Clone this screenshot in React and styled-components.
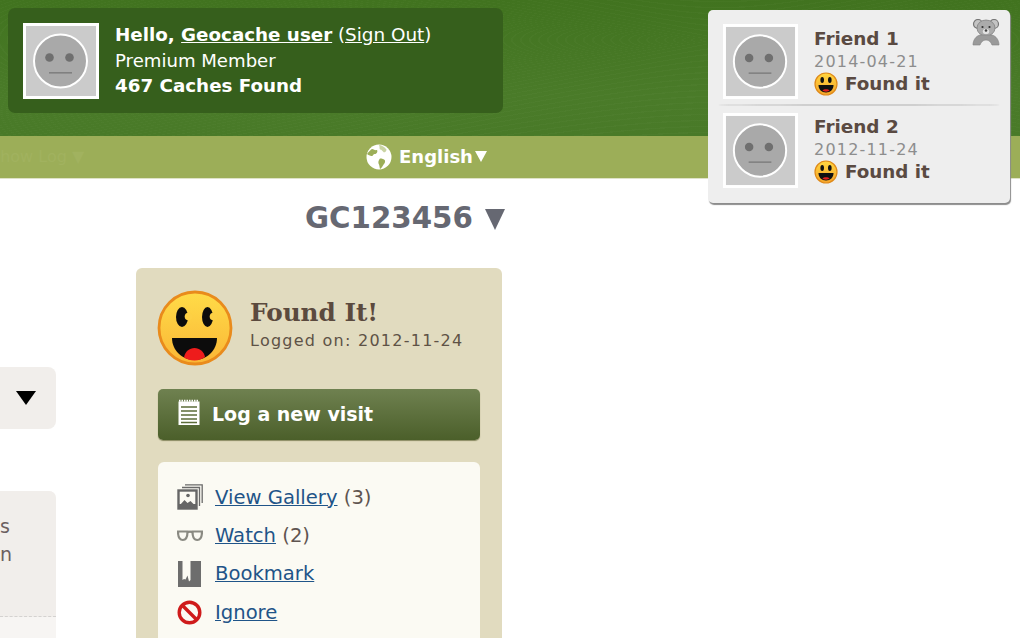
import React from "react";
import styled, { createGlobalStyle } from "styled-components";

const Global = createGlobalStyle`
  html, body { margin: 0; padding: 0; background: #fff; width: 1020px; height: 638px; overflow: hidden; }
  body { font-family: "DejaVu Sans", Verdana, sans-serif; }
  #root { width: 1020px; height: 638px; }
`;

const Page = styled.div`position: relative; width: 1020px; height: 638px; overflow: hidden; background: #fff;`;
const Header = styled.header`
  height: 136px; box-sizing: border-box; padding: 8px;
  background:
    repeating-radial-gradient(ellipse at 720px 40px, rgba(255,255,255,.018) 0 2px, transparent 2px 9px),
    linear-gradient(#41731f, #4a7b29 70%, #497a28);
`;
const UserCard = styled.div`
  width: 495px; height: 105px; box-sizing: border-box; padding: 15px 14px 14px 15px; border-radius: 7px;
  background: #365f1c; display: flex; gap: 16px; align-items: flex-start; color: #fff;
`;
const UserLines = styled.div`font-size: 18.1px; line-height: 25.5px; margin-top: -1px; white-space: nowrap;`;
const Bold = styled.span`font-weight: 700; font-size: 18.3px;`;
const UserLink = styled.a`color: inherit; text-decoration: underline; font-weight: ${p => (p.$bold ? 700 : 400)}; font-size: ${p => (p.$bold ? 18.3 : 18.4)}px;`;
const NavBar = styled.nav`
  height: 43px; background: #9cae58; border-bottom: 1px solid #dfe3c8; box-sizing: border-box;
  display: flex; align-items: center; justify-content: center; padding-right: 167px; gap: 7px;
  position: relative;
`;
const NavFaded = styled.span`position: absolute; left: -10px; top: 11px; font-size: 16px; color: #a1b25f; white-space: nowrap;`;
const Lang = styled.span`font-size: 18px; line-height: 22px; font-weight: 700; color: #fff; white-space: nowrap; display: flex; align-items: center; gap: 2px; margin-top: -1px;`;
const Caret = styled.span`
  display: inline-block; width: 0; height: 0;
  border-left: ${p => p.$w / 2}px solid transparent;
  border-right: ${p => p.$w / 2}px solid transparent;
  border-top: ${p => p.$h}px solid ${p => p.$color};
`;
const Body = styled.main`display: grid; grid-template-columns: 56px 366px 1fr; column-gap: 80px; position: relative;`;
const PageTitleRow = styled.div`
  grid-column: 1 / -1; height: 89px; box-sizing: border-box; padding: 21px 0 0 305px;
  font-size: 29.3px; font-weight: 700; color: #666872; line-height: 36px; white-space: nowrap;
  display: flex; align-items: flex-start; gap: 12px;
`;
const TitleCaret = styled.span`margin-top: 9px; line-height: 0;`;
const LeftCol = styled.div`display: flex; flex-direction: column; gap: 62px; padding-top: 188px; margin-top: -89px;`;
const Select = styled.div`
  height: 62px; background: #f1eeeb; border-radius: 0 8px 8px 0; display: flex; align-items: center; justify-content: flex-end; padding-right: 20px;
`;
const Info = styled.div`background: #f7f5f3; border-radius: 0 7px 0 0; overflow: hidden;`;
const InfoBody = styled.div`
  height: 126px; box-sizing: border-box; background: #f1eeeb; border-bottom: 1px dashed #d4d2d0;
  font-size: 19px; line-height: 28px; color: #6b6060; padding-top: 21px;
`;
const InfoFoot = styled.div`height: 24px;`;
const LogPanel = styled.section`
  background: #e1dbbf; border-radius: 6px 6px 0 0; padding: 22px 22px 0; height: 371px; box-sizing: border-box;
`;
const Status = styled.div`display: flex; gap: 17px; align-items: flex-start; margin-left: -1px;`;
const StatusTitle = styled.div`font-family: "DejaVu Serif", serif; font-weight: 700; font-size: 24.7px; color: #5b4a3e; line-height: 32px; margin-top: 7px;`;
const StatusDate = styled.div`font-size: 16px; line-height: 20px; color: #5e5246; letter-spacing: 1.25px; white-space: nowrap; margin-top: 2px;`;
const LogButton = styled.button`
  display: flex; align-items: center; gap: 12px; width: 322px; height: 51px; margin-top: 23px; padding: 0 0 2px 20px; border: 0; border-radius: 5px;
  background: linear-gradient(#6f8150, #4b5f2a); color: #fff; font: 700 19px "DejaVu Sans", sans-serif; box-shadow: 0 1px 1px #8a8a62;
`;
const PadWrap = styled.span`margin-top: -3px; line-height: 0;`;
const Links = styled.div`
  margin-top: 22px; width: 322px; height: 220px; box-sizing: border-box; background: #fbfaf3; border-radius: 6px 6px 0 0;
  padding: 16px 18px; display: flex; flex-direction: column;
`;
const LinkRow = styled.div`display: flex; align-items: center; gap: 12px; height: 38.4px; font-size: 19.6px; color: #5f5450;`;
const IconBox = styled.span`width: 27px; display: flex; justify-content: center; flex: none;`;
const BlueLink = styled.a`color: #1f5488; text-decoration: underline;`;
const Friends = styled.aside`
  position: absolute; left: 708px; top: 10px; width: 302px; height: 193px; box-sizing: border-box;
  background: #eeeeee; border-radius: 5px; box-shadow: 1px 2px 1px #8c8c8c; padding: 14px 15px 0;
`;
const FriendRow = styled.div`
  display: flex; gap: 16px; height: 89px; position: relative;
  &:first-of-type::after {
    content: ""; position: absolute; left: -5px; right: -5px; bottom: 7px; height: 2px; border-radius: 50%;
    background: #cfcfcf;
  }
`;
const FriendName = styled.div`font-size: 18.4px; font-weight: 700; color: #5a4a42; line-height: 22px; margin-top: ${p => (p.$second ? 3 : 4)}px;`;
const FriendDate = styled.div`font-size: 16px; color: #8d8d8d; line-height: 22px; letter-spacing: 1.2px; white-space: nowrap; margin: 1px 0 -1px;`;
const FriendStatus = styled.div`display: flex; gap: 7px; align-items: center; font-size: 18.3px; font-weight: 700; color: #5a4a42; line-height: 24px; white-space: nowrap;`;
const Bear = styled.span`position: absolute; right: 10px; top: 9px; line-height: 0;`;

const Avatar = ({ size = 76 }) => (
  <svg width={size} height={size} viewBox="0 0 76 76" style={{ flex: "none" }}>
    <rect width="76" height="76" fill="#fff" />
    <rect x="3" y="3" width="70" height="70" fill="#cbcbcb" />
    <circle cx="37.5" cy="38" r="26.500" fill="#a9a9a9" stroke="#fff" strokeWidth="2" />
    <circle cx="26.500" cy="34.500" r="4.300" fill="#6f6f6f" />
    <circle cx="46.500" cy="34.500" r="4.300" fill="#6f6f6f" />
    <rect x="26" y="49" width="23" height="1.600" fill="#808080" />
  </svg>
);

const Smile = ({ id, size = 24 }) => (
  <svg width={size} height={size} viewBox="0 0 24 24" style={{ flex: "none" }}>
    <defs>
      <linearGradient id={id} x1="0" y1="0" x2="0" y2="1"><stop offset="0" stopColor="#ffd640" /><stop offset="1" stopColor="#f7a52a" /></linearGradient>
    </defs>
    <circle cx="12" cy="12" r="11" fill={`url(#${id})`} stroke="#df8a1a" strokeWidth="1.200" />
    <ellipse cx="8.200" cy="8" rx="1.800" ry="3" fill="#111" />
    <ellipse cx="15.800" cy="8" rx="1.800" ry="3" fill="#111" />
    <path d="M4.500 13h15c0 4.500-3 7.500-7.500 7.500s-7.500-3-7.500-7.500z" fill="#111" />
    <path d="M8.500 18.500c1-1.800 6-1.800 7 0-1 1.500-6 1.500-7 0z" fill="#e02020" />
  </svg>
);

const BigSmile = () => (
  <svg width="76" height="76" viewBox="0 0 76 76" style={{ flex: "none" }}>
    <defs>
      <linearGradient id="bg" x1="0" y1="0" x2="0" y2="1"><stop offset="0" stopColor="#ffdc48" /><stop offset="1" stopColor="#fab636" /></linearGradient>
    </defs>
    <circle cx="38" cy="38" r="36" fill="url(#bg)" stroke="#e98b1c" strokeWidth="2.800" />
    <ellipse cx="25" cy="27" rx="6" ry="10" fill="#0c0c0c" />
    <circle cx="31.500" cy="26.500" r="3.800" fill="#fdd044" />
    <ellipse cx="50.500" cy="27" rx="5.500" ry="10" fill="#0c0c0c" />
    <circle cx="56.500" cy="26.500" r="3.800" fill="#fdd044" />
    <path d="M15 48h45c0 12-10 22-22.500 22S15 60 15 48z" fill="#0c0c0c" />
    <path d="M27 67.500c1-6 5.500-9.500 10.500-9.500s9.500 3.500 10.500 9c-3 2.200-6.500 3.500-10.500 3.500s-7.500-1-10.500-3z" fill="#ee1c1c" />
  </svg>
);

const Globe = () => (
  <svg width="26" height="26" viewBox="0 0 26 26" style={{ flex: "none" }}>
    <circle cx="13" cy="13" r="12.500" fill="#fff" />
    <path d="M1 10c2-2.500 3.500-4 5-5 2 .5 3 1.500 5 1 1 1.500 0 3-1.500 4-1.500 0-2.500 .5-3 2-1.800 0-3.500-.5-5.500-2z" fill="#9cae58" />
    <path d="M14 14.500c2 0 4 .5 5 2 .5 2-1 3.500-2 5-.5 1-1.500 2.500-3 3.500-.5-2-.5-4-1.500-5.500-.5-2 .5-4 1.500-5z" fill="#9cae58" />
    <path d="M13 1c1 1.500 0 3 1 4.500 2 0 2.500 2 4 3 1.500-.5 2.500-1.500 2.500-3C18 2.500 15.500 1 13 1z" fill="#9cae58" opacity=".55" />
  </svg>
);

const Pad = () => (
  <svg width="22" height="26" viewBox="0 0 22 26">
    <rect x="0.500" y="2.500" width="21" height="23.500" fill="#fff" />
    <path d="M1 1.800h20" stroke="#fff" strokeWidth="2" strokeDasharray="1.500 1" />
    <path d="M3 8h16M3 12h16M3 16h16M3 20h16M3 23.500h16" stroke="#5c6d3a" strokeWidth="1.300" />
  </svg>
);

const GalleryIcon = () => (
  <svg width="26" height="26" viewBox="0 0 26 26">
    <path d="M8 .8h17.200V19M5 3.500h17.500V22" fill="none" stroke="#6a6a6a" strokeWidth="1.300" />
    <rect x="1.500" y="6.500" width="18" height="18" fill="#fbfaf3" stroke="#666" strokeWidth="2.400" />
    <rect x="1" y="20" width="19" height="5" fill="#666" />
    <path d="M3 21l4.500-5 3 3 3-2 4 4z" fill="#666" />
    <circle cx="11" cy="11.500" r="1.800" fill="#666" />
  </svg>
);
const GlassesIcon = () => (
  <svg width="26" height="14" viewBox="0 0 26 14">
    <path d="M1 2.500h9.500c0 5-1 8.500-4.700 8.500S1 7.500 1 2.500zM15.500 2.500H25c0 5-1 8.500-4.700 8.500s-4.800-3.500-4.800-8.500zM10.500 3.500c1.500-1 3.500-1 5 0" fill="none" stroke="#8a8a82" strokeWidth="2.200" />
  </svg>
);
const BookmarkIcon = () => (
  <svg width="23" height="26" viewBox="0 0 23 26">
    <rect width="23" height="26" fill="#6d6d6d" />
    <path d="M4.500 0h8v19l-1.500 1.500-1.500-6-2 4-1.500-.5-1.500 1z" fill="#fbfaf3" />
  </svg>
);
const IgnoreIcon = () => (
  <svg width="25" height="25" viewBox="0 0 25 25">
    <circle cx="12.500" cy="12.500" r="10.300" fill="none" stroke="#cf1b1b" strokeWidth="3.400" />
    <path d="M5 5l15 15" stroke="#cf1b1b" strokeWidth="3.400" />
  </svg>
);
const BearIcon = () => (
  <svg width="28" height="27" viewBox="0 0 28 27">
    <circle cx="6" cy="5" r="4.500" fill="#c4c4c4" stroke="#777" strokeWidth="1.200" />
    <circle cx="22" cy="5" r="4.500" fill="#c4c4c4" stroke="#777" strokeWidth="1.200" />
    <ellipse cx="14" cy="9" rx="9" ry="8" fill="#ababab" stroke="#808080" strokeWidth=".8" />
    <ellipse cx="14" cy="12.500" rx="3.200" ry="2.800" fill="#e2e2e2" />
    <circle cx="14" cy="11.500" r="1.300" fill="#444" />
    <circle cx="10.500" cy="8" r="1.100" fill="#333" /><circle cx="17.500" cy="8" r="1.100" fill="#333" />
    <path d="M1 26c0-5 3-9 7-10h12c4 1 7 5 7 10h-7c-1-3-3-5-6-5s-5 2-6 5z" fill="#9a9a9a" stroke="#808080" strokeWidth=".6" />
  </svg>
);

const friends = [
  { name: "Friend 1", date: "2014-04-21" },
  { name: "Friend 2", date: "2012-11-24" },
];

export default function App() {
  return (
    <Page>
      <Global />
      <Header>
        <UserCard>
          <Avatar />
          <UserLines>
            <div><Bold>Hello, </Bold><UserLink $bold href="#">Geocache user</UserLink> (<UserLink href="#">Sign Out</UserLink>)</div>
            <div>Premium Member</div>
            <Bold>467 Caches Found</Bold>
          </UserLines>
        </UserCard>
      </Header>
      <NavBar>
        <NavFaded>Show Log ▼</NavFaded>
        <Globe />
        <Lang>English<Caret $w={13} $h={11} $color="#fff" /></Lang>
      </NavBar>
      <Body>
        <PageTitleRow>GC123456<TitleCaret><Caret $w={20} $h={21} $color="#666872" /></TitleCaret></PageTitleRow>
        <LeftCol>
          <Select><Caret $w={20} $h={14} $color="#000" /></Select>
          <Info>
            <InfoBody>s<br />n</InfoBody>
            <InfoFoot />
          </Info>
        </LeftCol>
        <LogPanel>
          <Status>
            <BigSmile />
            <div>
              <StatusTitle>Found It!</StatusTitle>
              <StatusDate>Logged on: 2012-11-24</StatusDate>
            </div>
          </Status>
          <LogButton><PadWrap><Pad /></PadWrap>Log a new visit</LogButton>
          <Links>
            <LinkRow><IconBox><GalleryIcon /></IconBox><span><BlueLink href="#">View Gallery</BlueLink> (3)</span></LinkRow>
            <LinkRow><IconBox><GlassesIcon /></IconBox><span><BlueLink href="#">Watch</BlueLink> (2)</span></LinkRow>
            <LinkRow><IconBox><BookmarkIcon /></IconBox><BlueLink href="#">Bookmark</BlueLink></LinkRow>
            <LinkRow><IconBox><IgnoreIcon /></IconBox><BlueLink href="#">Ignore</BlueLink></LinkRow>
          </Links>
        </LogPanel>
      </Body>
      <Friends>
        <Bear><BearIcon /></Bear>
        {friends.map((f, i) => (
          <FriendRow key={f.name}>
            <Avatar size={75} />
            <div>
              <FriendName $second={i === 1}>{f.name}</FriendName>
              <FriendDate>{f.date}</FriendDate>
              <FriendStatus><Smile id={`sm${i}`} />Found it</FriendStatus>
            </div>
          </FriendRow>
        ))}
      </Friends>
    </Page>
  );
}
